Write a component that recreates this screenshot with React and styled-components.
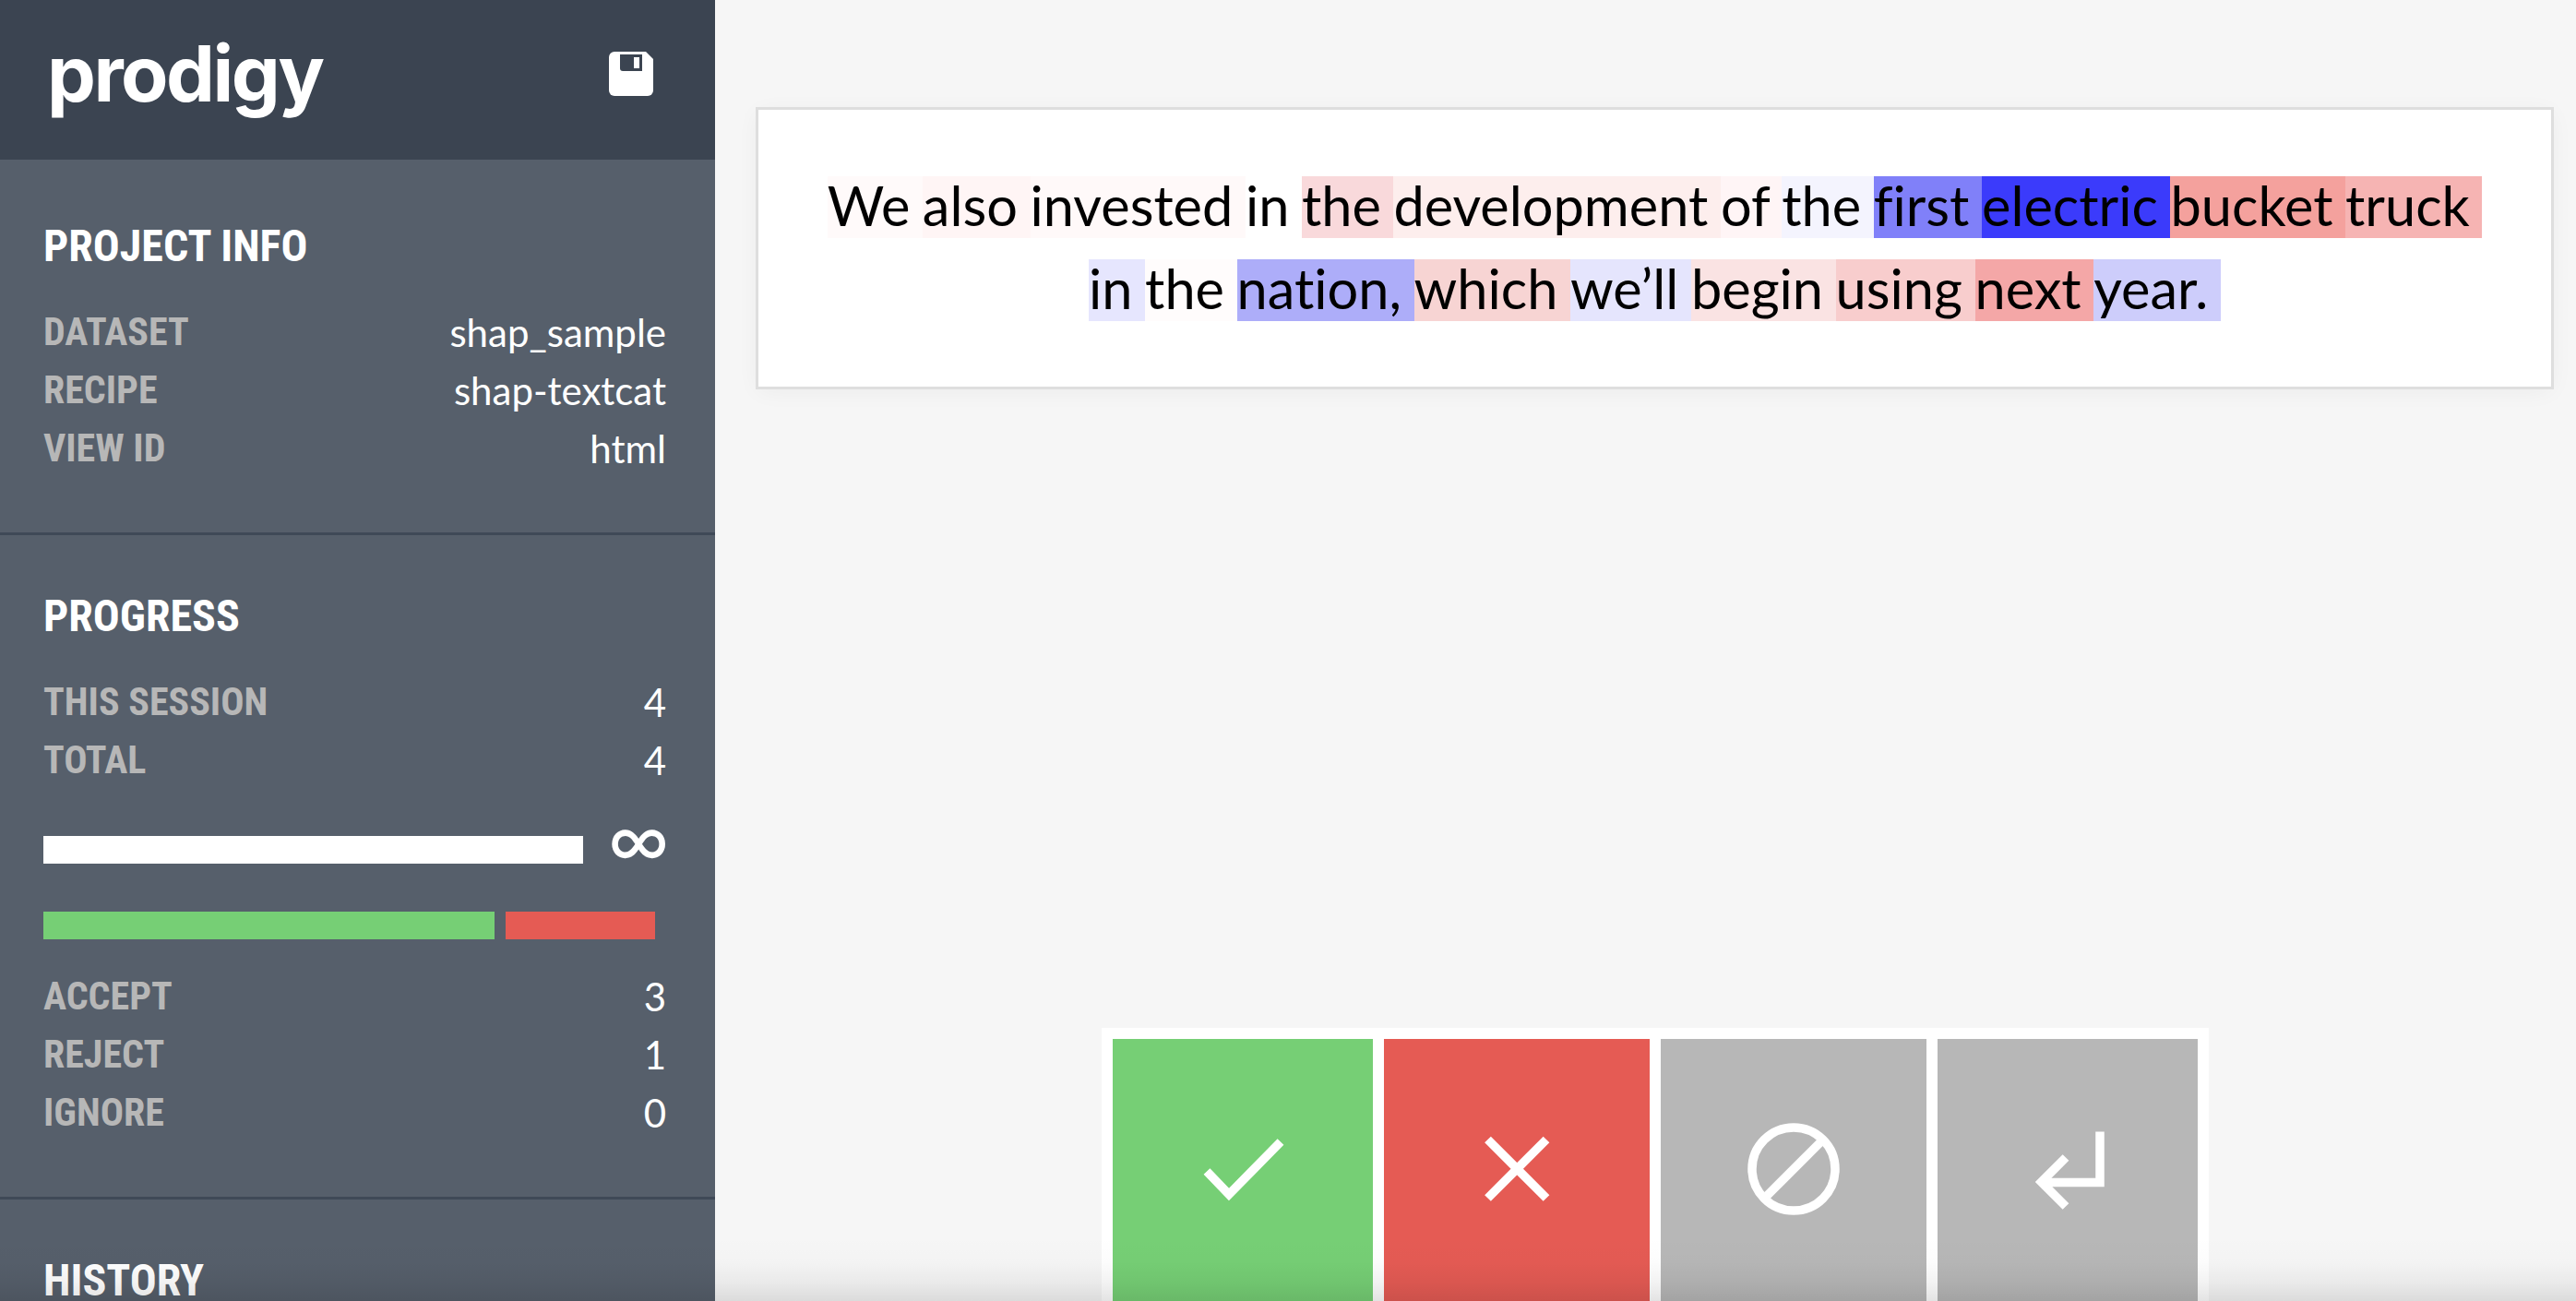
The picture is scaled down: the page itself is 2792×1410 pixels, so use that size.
import styled, { createGlobalStyle } from "styled-components";

const GlobalStyle = createGlobalStyle`
  html, body {
    margin: 0;
    height: 100%;
    overflow: hidden;
  }

  body {
    background: #f6f6f6;
    font-family: "Lato", "Liberation Sans", sans-serif;
  }
`;

const FIRST_LINE = [
  ["We ", "#fffafa"],
  ["also ", "#fff5f5"],
  ["invested ", "#fff9f9"],
  ["in ", "#ffffff"],
  ["the ", "#f9d9db"],
  ["development ", "#fdeeed"],
  ["of ", "#fff5f6"],
  ["the ", "#f4f4fe"],
  ["first ", "#8080f9"],
  ["electric ", "#3b3bfb"],
  ["bucket ", "#f4a19d"],
  ["truck ", "#f6b4b3"],
];

const SECOND_LINE = [
  ["in ", "#e6e6fe"],
  ["the ", "#fffcfc"],
  ["nation, ", "#adadf9"],
  ["which ", "#f7d4d3"],
  ["we’ll ", "#e5e5fd"],
  ["begin ", "#fae3e3"],
  ["using ", "#f8cdcd"],
  ["next ", "#f4a7a7"],
  ["year. ", "#cdcdfb"],
];

const Stat = ({ label, value }) => (
  <Row>
    <Label>{label}</Label>
    <Value>{value}</Value>
  </Row>
);

const SaveIcon = () => (
  <SaveWrap>
    <svg width="48" height="48" viewBox="0 0 48 48">
      <path d="M6 0H40L48 8V42A6 6 0 0 1 42 48H6A6 6 0 0 1 0 42V6A6 6 0 0 1 6 0Z" fill="#fff" />
      <path d="M12 3H36V21H15A3 3 0 0 1 12 18Z" fill="#3b4451" />
      <rect x="27" y="6" width="6" height="12" fill="#fff" />
    </svg>
  </SaveWrap>
);

const ActionIcon = ({ children }) => (
  <svg width="100" height="100" viewBox="0 0 100 100" fill="none" stroke="#fff" strokeWidth="9.5">
    {children}
  </svg>
);

const App = () => {
  return (
    <Page>
      <GlobalStyle />
      <Sidebar>
        <Brand>
          <Logo>prodigy</Logo>
          <SaveIcon />
        </Brand>
        <Section $first>
          <Title>PROJECT INFO</Title>
          <Stat label="DATASET" value="shap_sample" />
          <Stat label="RECIPE" value="shap-textcat" />
          <Stat label="VIEW ID" value="html" />
        </Section>
        <Section>
          <Title>PROGRESS</Title>
          <Stat label="THIS SESSION" value="4" />
          <Stat label="TOTAL" value="4" />
          <TotalBar>
            <TotalFill />
            <Endless>∞</Endless>
          </TotalBar>
          <SplitBar>
            <SplitPart $color="#76cf75" $grow={489} />
            <SplitPart $color="#e55b54" $grow={162} />
          </SplitBar>
          <Stat label="ACCEPT" value="3" />
          <Stat label="REJECT" value="1" />
          <Stat label="IGNORE" value="0" />
        </Section>
        <Section>
          <Title>HISTORY</Title>
        </Section>
      </Sidebar>
      <Main>
        <Card>
          <TextLine>
            {FIRST_LINE.map(([word, color], i) => (
              <Word key={i} $bg={color}>{word}</Word>
            ))}
          </TextLine>
          <TextLine>
            {SECOND_LINE.map(([word, color], i) => (
              <Word key={i} $bg={color}>{word}</Word>
            ))}
          </TextLine>
        </Card>
        <Actions>
          <ActionButton $color="#76cf75" $wide={false}>
            <ActionIcon>
              <path d="M11 52.5L35 77.5L91 20.5" />
            </ActionIcon>
          </ActionButton>
          <ActionButton $color="#e55b54" $wide>
            <ActionIcon>
              <path d="M18.5 18L82 81.5M82 18L18.5 81.5" />
            </ActionIcon>
          </ActionButton>
          <ActionButton $color="#b7b7b7" $wide>
            <ActionIcon>
              <circle cx="50" cy="50" r="45" />
              <path d="M82 18L18 82" />
            </ActionIcon>
          </ActionButton>
          <ActionButton $color="#b7b7b7" $wide={false}>
            <ActionIcon>
              <path d="M85 9.5V64.5H23M48 37.5L21.5 64L48 90.5" />
            </ActionIcon>
          </ActionButton>
        </Actions>
      </Main>
      <BottomFade />
    </Page>
  );
};

export default App;

/* ---------------------------- STYLED COMPONENTS --------------------------- */

const Page = styled.div`
  position: relative;
  display: flex;
  height: 100vh;
  overflow: hidden;
`;

const Sidebar = styled.aside`
  width: 775px;
  flex-shrink: 0;
  background: #565f6b;
  color: #fff;
  overflow: hidden;
`;

const Brand = styled.header`
  height: 173px;
  box-sizing: border-box;
  background: #3b4451;
  padding: 0 67px 0 51px;
  display: flex;
  align-items: center;
  justify-content: space-between;
`;

const Logo = styled.div`
  font-family: "Inter", sans-serif;
  font-weight: 700;
  font-size: 84px;
  line-height: 1;
  letter-spacing: -2.5px;
  margin-top: -14px;
`;

const SaveWrap = styled.span`
  display: flex;
  margin-top: -13px;
`;

const Section = styled.section`
  padding: ${(p) => (p.$first ? "69px" : "63px")} 53px 60px 47px;
  border-bottom: 3px solid #3f4957;
`;

const Title = styled.h2`
  margin: 0 0 36px;
  font-family: "Roboto", sans-serif;
  font-stretch: 84%;
  font-weight: 700;
  font-size: 48px;
  line-height: 50px;
`;

const Row = styled.div`
  height: 63px;
  display: flex;
  align-items: center;
  justify-content: space-between;
`;

const Label = styled.span`
  font-family: "Roboto", sans-serif;
  font-stretch: 83%;
  font-weight: 700;
  font-size: 42px;
  color: #b7b7b7;
`;

const Value = styled.span`
  font-family: "Lato", sans-serif;
  font-variant-ligatures: none;
  font-size: 42px;
  color: #fff;
`;

const TotalBar = styled.div`
  height: 30px;
  margin-top: 51px;
  display: flex;
  justify-content: space-between;
`;

const TotalFill = styled.div`
  width: 585px;
  background: #fff;
`;

const Endless = styled.span`
  font-family: "Lato", sans-serif;
  font-size: 92px;
  line-height: 30px;
  margin: -14px -4px 0 0;
`;

const SplitBar = styled.div`
  width: 663px;
  height: 30px;
  margin: 52px 0 30px;
  display: flex;
  gap: 12px;
`;

const SplitPart = styled.div`
  flex: ${(p) => p.$grow} 0 0;
  background: ${(p) => p.$color};
`;

const Main = styled.main`
  flex: 1;
  min-width: 0;
  padding: 119px 27px 0 47px;
  display: flex;
  flex-direction: column;
  align-items: center;
`;

const Card = styled.div`
  width: 100%;
  height: 300px;
  box-sizing: border-box;
  padding: 58px 0;
  background: #fff;
  box-shadow: 0 0 0 3px #dedede, 0 4px 24px rgba(0, 0, 0, 0.05);
`;

const TextLine = styled.div`
  font-family: "Lato", sans-serif;
  font-variant-ligatures: none;
  font-size: 59.5px;
  line-height: 90px;
  word-spacing: -1.7px;
  color: #000;
  text-align: center;
  white-space: pre;
`;

const Word = styled.span`
  display: inline-block;
  line-height: 63px;
  padding-bottom: 4px;
  background: ${(p) => p.$bg};
`;

const Actions = styled.div`
  margin-top: auto;
  width: 1200px;
  height: 296px;
  box-sizing: border-box;
  padding: 12px 12px 0;
  background: #fff;
  display: flex;
  gap: 12px;
`;

const ActionButton = styled.button`
  flex: 0 0 ${(p) => (p.$wide ? "288px" : "282px")};
  height: 284px;
  padding: 0 0 2px;
  border: none;
  background: ${(p) => p.$color};
  display: flex;
  align-items: center;
  justify-content: center;
`;

const BottomFade = styled.div`
  position: absolute;
  left: 0;
  right: 0;
  bottom: 0;
  height: 70px;
  background: linear-gradient(
    to bottom,
    rgba(0, 0, 0, 0),
    rgba(0, 0, 0, 0.012) 40%,
    rgba(0, 0, 0, 0.05) 72%,
    rgba(0, 0, 0, 0.11)
  );
  pointer-events: none;
`;
